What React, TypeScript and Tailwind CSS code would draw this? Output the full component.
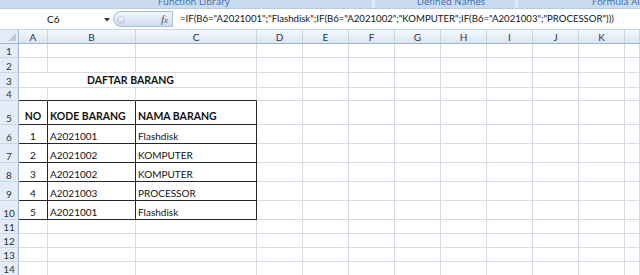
import React from 'react';

const COLS = [
  { k: 'A', w: 'w-[29px]' },
  { k: 'B', w: 'w-[88px]' },
  { k: 'C', w: 'w-[121px]' },
  { k: 'D', w: 'w-[46px]' },
  { k: 'E', w: 'w-[46px]' },
  { k: 'F', w: 'w-[46px]' },
  { k: 'G', w: 'w-[46px]' },
  { k: 'H', w: 'w-[46px]' },
  { k: 'I', w: 'w-[46px]' },
  { k: 'J', w: 'w-[46px]' },
  { k: 'K', w: 'w-[46px]' },
  { k: '', w: 'w-[15px]' },
];

const ROWS = [
  { n: 1, h: 'h-[14px]' },
  { n: 2, h: 'h-[15px]' },
  { n: 3, h: 'h-[15px]' },
  { n: 4, h: 'h-[13px]' },
  { n: 5, h: 'h-[24px]' },
  { n: 6, h: 'h-[19px]' },
  { n: 7, h: 'h-[19px]' },
  { n: 8, h: 'h-[19px]' },
  { n: 9, h: 'h-[19px]' },
  { n: 10, h: 'h-[19px]' },
  { n: 11, h: 'h-[14px]' },
  { n: 12, h: 'h-[14px]' },
  { n: 13, h: 'h-[14px]' },
  { n: 14, h: 'h-[14px]' },
];

const DATA: Record<number, [string, string, string]> = {
  6: ['1', 'A2021001', 'Flashdisk'],
  7: ['2', 'A2021002', 'KOMPUTER'],
  8: ['3', 'A2021002', 'KOMPUTER'],
  9: ['4', 'A2021003', 'PROCESSOR'],
  10: ['5', 'A2021001', 'Flashdisk'],
};

const FORMULA =
  '=IF(B6="A2021001";"Flashdisk";IF(B6="A2021002";"KOMPUTER";IF(B6="A2021003";"PROCESSOR")))';

function Cell({ row, col, w }: { row: number; col: number; w: string }) {
  const inTable = row >= 5 && row <= 10 && col <= 2;
  const aboveTable = row === 4 && col <= 2;
  const right = inTable ? 'border-r-[#262626]' : 'border-r-[#d4dbe7]';
  const bottom = inTable || aboveTable ? 'border-b-[#262626]' : 'border-b-[#d4dbe7]';

  let text: React.ReactNode = null;
  let align = 'justify-start pl-[2px]';
  if (row === 5) {
    text = ['NO', 'KODE BARANG', 'NAMA BARANG'][col];
    if (col === 0) align = 'justify-center';
  } else if (DATA[row] && col <= 2) {
    text = DATA[row][col];
    if (col === 0) align = 'justify-center';
  }

  return (
    <div
      className={`${w} h-full shrink-0 border-r border-b ${right} ${bottom} flex items-end ${align} overflow-hidden whitespace-nowrap ${
        row === 5 ? 'font-bold text-[10.5px] pb-[3px]' : 'text-[10px] pb-[2px]'
      } leading-none text-[#111]`}
    >
      {text}
    </div>
  );
}

export default function App() {
  return (
    <div className="w-[640px] h-[275px] overflow-hidden bg-white font-['Lato',sans-serif] select-none">
      {/* ribbon group labels */}
      <div className="h-[8px] flex overflow-hidden bg-[#dfe9f5] text-[9.5px] leading-none text-[#3e6aaa] font-['Open_Sans',sans-serif]">
        <div className="w-[372px] shrink-0 bg-[#c9dbf1] rounded-br-[2px] relative">
          <span className="absolute left-[158px] top-[-3px]">Function Library</span>
        </div>
        <div className="w-[3px] shrink-0" />
        <div className="w-[140px] shrink-0 bg-[#c9dbf1] rounded-b-[2px] relative">
          <span className="absolute left-[42px] top-[-3px]">Defined Names</span>
        </div>
        <div className="w-[3px] shrink-0" />
        <div className="flex-1 bg-[#c9dbf1] rounded-bl-[2px] relative overflow-hidden">
          <span className="absolute left-[74px] top-[-3px] whitespace-nowrap">Formula Auditing</span>
        </div>
      </div>

      {/* formula bar */}
      <div className="h-[22px] flex items-stretch bg-white border-t border-t-[#b6cbe6] border-b border-b-[#c5d5ea]">
        <div className="w-[113px] shrink-0 relative flex items-center">
          <span className="absolute left-[47px] top-[5px] text-[10px] leading-none text-[#111]">C6</span>
          <svg className="absolute left-[104px] top-[9px]" width="6" height="4" viewBox="0 0 6 4">
            <path d="M0 0 H6 L3 3.5 Z" fill="#333" />
          </svg>
        </div>
        <div className="w-[60px] shrink-0 my-[2px] rounded-l-full border border-[#a9bdd8] bg-gradient-to-b from-[#f2f6fb] to-[#cfdcee] relative">
          <div className="absolute left-[3px] top-[4px] w-[8px] h-[8px] rounded-full bg-gradient-to-b from-[#ffffff] to-[#c7d3e3] border border-[#b8c7dc]" />
          <span className="absolute left-[47px] top-[2px] font-['Liberation_Serif',serif] italic text-[11px] leading-none text-[#555]">
            f<span className="text-[9px]">x</span>
          </span>
        </div>
        <div className="flex-1 flex items-center pl-[7px] overflow-hidden whitespace-nowrap text-[9.6px] leading-none text-[#111]">
          {FORMULA}
        </div>
      </div>

      {/* column headers */}
      <div className="h-[14px] flex">
        <div className="w-[19px] shrink-0 h-full bg-[#e4ecf7] border-r border-b border-[#9eb6ce] relative">
          <svg className="absolute right-[2px] bottom-[2px]" width="8" height="8" viewBox="0 0 8 8">
            <path d="M8 0 V8 H0 Z" fill="#b9c9dc" />
          </svg>
        </div>
        {COLS.map((c) => (
          <div
            key={c.k || 'L'}
            className={`${c.w} shrink-0 h-full bg-gradient-to-b from-[#f6f9fc] to-[#dbe5f2] border-r border-r-[#c5d3e4] border-b border-b-[#9eb6ce] flex items-center justify-center text-[10px] leading-none text-[#27354a]`}
          >
            {c.k}
          </div>
        ))}
      </div>

      {/* rows */}
      {ROWS.map((r) => (
        <div key={r.n} className={`${r.h} flex`}>
          <div className="w-[19px] shrink-0 h-full bg-[#e4ecf7] border-r border-r-[#9eb6ce] border-b border-b-[#c9d6e6] flex items-end justify-center pb-[1px] text-[10px] leading-none text-[#27354a]">
            {r.n}
          </div>
          {r.n === 3 ? (
            <>
              <div className="w-[238px] shrink-0 h-full border-r border-b border-[#d4dbe7] flex items-end justify-center pb-[2px] pr-[14px] font-bold text-[10.5px] leading-none text-[#111]">
                DAFTAR BARANG
              </div>
              {COLS.slice(3).map((c, i) => (
                <Cell key={i} row={3} col={i + 3} w={c.w} />
              ))}
            </>
          ) : (
            COLS.map((c, i) => <Cell key={i} row={r.n} col={i} w={c.w} />)
          )}
        </div>
      ))}
    </div>
  );
}
